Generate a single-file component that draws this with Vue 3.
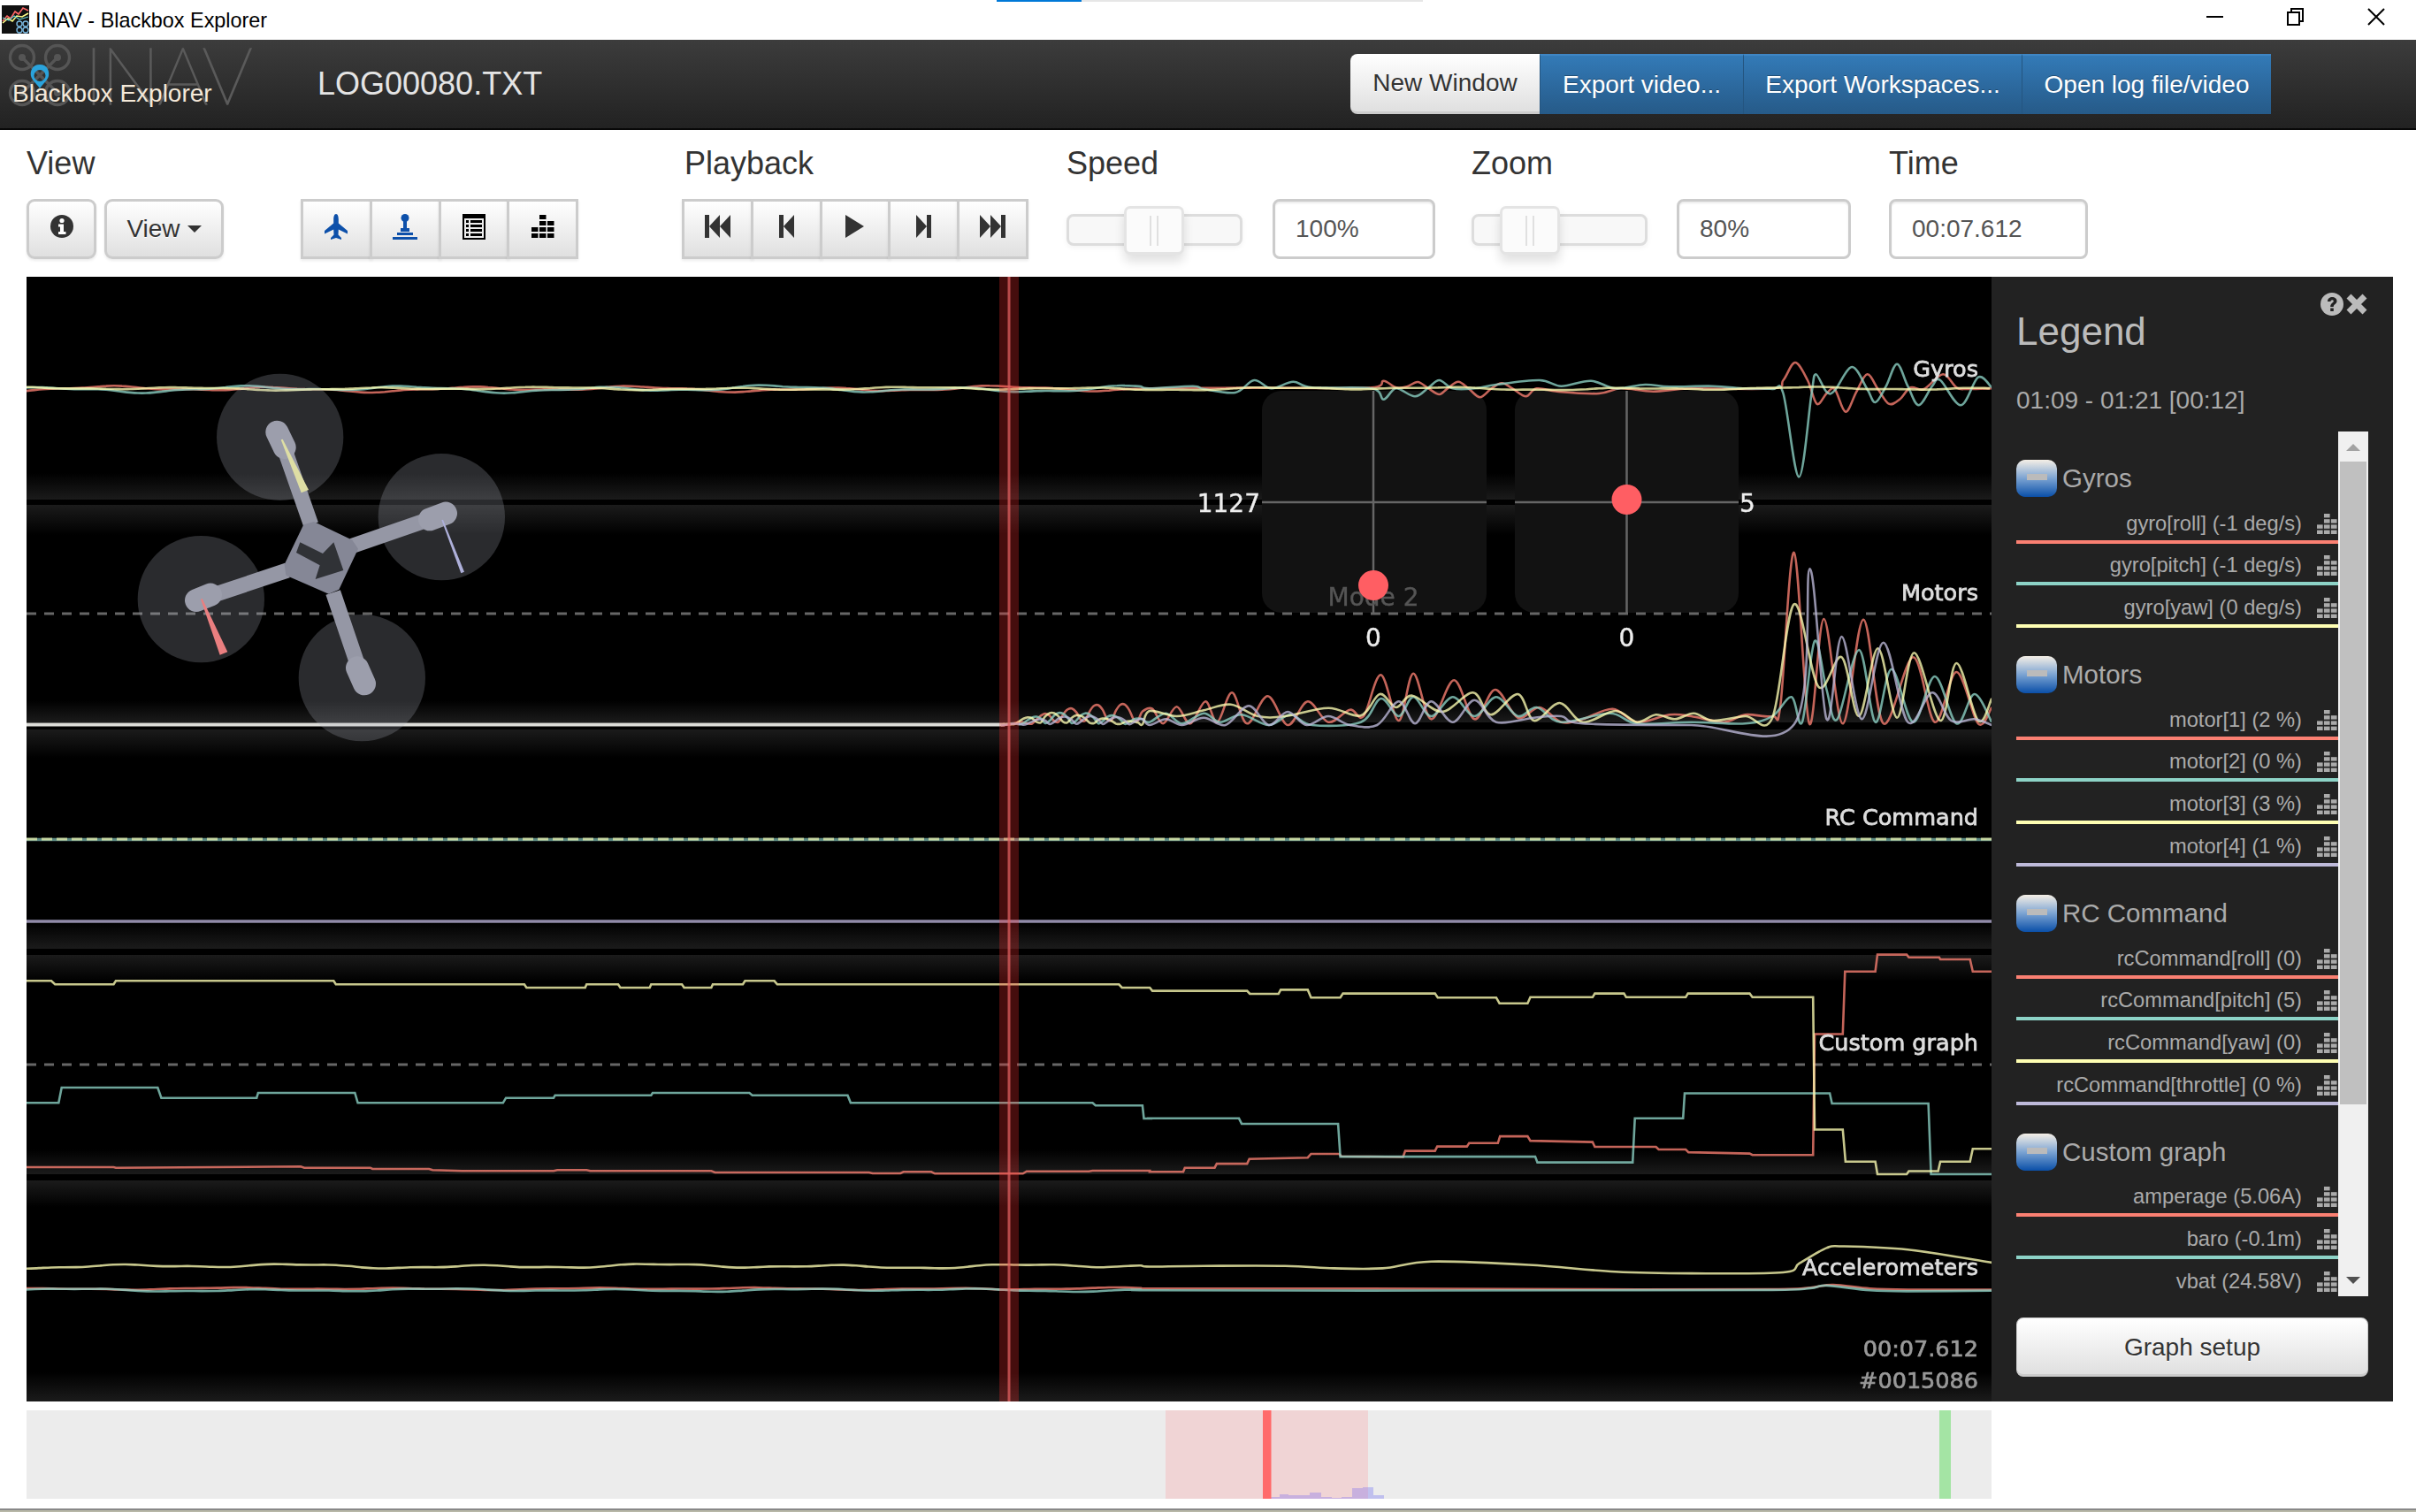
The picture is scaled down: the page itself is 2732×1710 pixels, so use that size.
<script setup>
const z4 = ([x, y]) => [1300 + x / 1.633, 380 + y / 3]
const z8 = ([x, y]) => [x / 1.206, 1000 + y / 3]
const z9 = ([x, y]) => [1300 + x / 1.633, 1000 + y / 2.613]

const pairs = (list, fn) => {
  const out = []
  for (let i = 0; i < list.length; i += 2) out.push(fn([list[i], list[i + 1]]))
  return out
}

// catmull-rom through the sampled peaks
function smooth(pts) {
  let d = `M${pts[0][0].toFixed(1)} ${pts[0][1].toFixed(1)}`
  for (let i = 0; i < pts.length - 1; i++) {
    const p0 = pts[i - 1] || pts[i]
    const p1 = pts[i]
    const p2 = pts[i + 1]
    const p3 = pts[i + 2] || p2
    const c1x = p1[0] + (p2[0] - p0[0]) / 6
    const c1y = p1[1] + (p2[1] - p0[1]) / 6
    const c2x = p2[0] - (p3[0] - p1[0]) / 6
    const c2y = p2[1] - (p3[1] - p1[1]) / 6
    d += `C${c1x.toFixed(1)} ${c1y.toFixed(1)} ${c2x.toFixed(1)} ${c2y.toFixed(1)} ${p2[0].toFixed(1)} ${p2[1].toFixed(1)}`
  }
  return d
}
const straight = (pts) => 'M' + pts.map((p) => `${p[0].toFixed(1)} ${p[1].toFixed(1)}`).join('L')

function wiggle(from, to, y, amp, seed, step = 9) {
  const pts = []
  for (let x = from; x <= to; x += step) {
    const v = Math.sin(x * 0.031 + seed) + 0.6 * Math.sin(x * 0.013 + seed * 2.3) + 0.4 * Math.sin(x * 0.077 + seed * 0.7)
    pts.push([x, y + v * amp])
  }
  return pts
}
function motorWiggle(from, to, y, amp, seed) {
  const pts = []
  for (let x = from; x <= to; x += 5) {
    const grow = Math.min(1, (x - from) / 50)
    const v = Math.abs(Math.sin(x * 0.105 + seed)) * (0.6 + 0.4 * Math.sin(x * 0.021 + seed))
    pts.push([x, y - v * amp * grow])
  }
  return pts
}

const RED = '#fb8072'
const TEAL = '#8dd3c7'
const YELLOW = '#ffffb3'
const LAV = '#bebada'

const gyroRed = [...wiggle(30, 1296, 440, 2, 1.1), ...pairs([0,178,130,176,260,176,410,175,432,152,455,175,475,172,495,156,515,178,535,198,550,178,570,155,590,180,610,208,630,180,650,160,670,178,695,205,715,178,760,190,830,195,870,178,930,188,1000,178,1150,178,1170,150,1192,90,1215,150,1232,230,1250,195,1265,180,1285,257,1305,190,1325,130,1345,180,1365,230,1385,215,1405,175,1430,180,1465,130,1490,175,1510,180,1555,178], z4)]
const gyroTeal = [...wiggle(30, 1296, 440, 2.4, 2.7), ...pairs([0,178,80,170,100,180,158,192,193,150,225,178,265,155,300,175,410,178,432,215,455,178,490,205,515,175,535,150,560,178,600,178,640,165,720,150,760,170,815,152,860,178,915,165,960,172,1040,170,1100,178,1150,180,1170,195,1199,478,1222,200,1230,130,1250,190,1265,185,1297,105,1325,180,1340,225,1360,170,1380,95,1400,170,1420,235,1445,170,1460,150,1498,235,1530,140,1555,175], z4)]
const gyroYellow = wiggle(30, 2254, 439.5, 1.1, 4.2, 6)

const motorRed = [...motorWiggle(1132, 1296, 820, 24, 0.2), ...pairs([5,1265,25,1315,50,1258,75,1315,103,1240,125,1310,152,1210,180,1315,218,1222,255,1320,292,1240,330,1310,370,1268,395,1290,427,1150,460,1305,487,1145,520,1300,562,1168,600,1300,638,1200,680,1295,720,1260,760,1310,800,1300,855,1265,900,1310,960,1285,1000,1290,1060,1310,1100,1285,1150,1290,1165,1250,1190,735,1218,1315,1245,960,1280,1315,1318,962,1355,1315,1410,1090,1450,1310,1490,1140,1530,1315,1555,1260], z4)]
const motorTeal = [...motorWiggle(1132, 1296, 820, 14, 1.4), ...pairs([0,1310,30,1280,60,1315,100,1280,130,1310,170,1285,220,1320,260,1285,300,1320,390,1310,427,1230,460,1290,487,1225,520,1290,560,1225,600,1290,640,1225,680,1290,715,1260,760,1310,850,1280,900,1315,1000,1310,1100,1315,1150,1290,1185,1225,1205,1310,1228,1035,1250,1200,1270,1300,1310,1065,1340,1310,1370,1130,1410,1310,1450,1155,1490,1315,1523,1215,1555,1310], z4)]
const motorYellow = [...motorWiggle(1132, 1296, 820, 15, 2.3), ...pairs([0,1272,50,1290,100,1270,150,1250,200,1290,250,1290,330,1262,390,1288,425,1215,455,1260,485,1220,540,1275,597,1210,630,1285,680,1215,710,1305,757,1245,800,1310,860,1272,900,1310,935,1285,970,1300,1005,1280,1040,1305,1100,1290,1150,1295,1190,910,1235,1190,1278,1090,1310,1290,1345,1060,1380,1295,1412,1075,1460,1305,1490,1110,1530,1305,1555,1230], z4)]
const motorLav = [...motorWiggle(1132, 1296, 820, 10, 0.9), ...pairs([0,1320,30,1300,60,1320,100,1295,140,1320,183,1255,220,1320,255,1275,290,1320,330,1290,370,1320,420,1320,460,1240,490,1315,520,1240,560,1310,600,1235,640,1310,710,1295,760,1290,800,1315,1000,1320,1190,1318,1219,790,1250,1300,1278,1020,1315,1300,1355,1040,1400,1310,1445,1210,1480,1305,1523,1300,1555,1320], z4)]

const customYellow = [...pairs([36,328,70,328,75,340,155,340,158,328,455,328,458,340,715,340,718,351,798,351,800,340,843,340,846,351,886,351,888,340,930,340,933,351,970,351,972,340,1013,340,1016,328,1056,328,1060,340,1526,340,1530,351,1568,351], z8), ...pairs([5,315,180,315,185,324,238,324,242,312,292,312,298,335,352,335,357,323,527,323,532,335,640,335,646,352,698,352,703,334,818,334,822,323,876,323,880,334,990,334,994,323,1108,323,1113,334,1225,334,1228,725,1280,725,1285,820,1340,820,1344,857,1398,857,1402,848,1456,848,1460,820,1515,820,1520,782,1555,782], z9)]
const customTeal = [...pairs([36,742,80,742,84,690,215,690,220,725,350,725,352,708,484,708,488,742,686,742,690,725,755,725,757,716,888,716,890,708,1022,708,1026,716,1156,716,1160,742,1490,742,1494,751,1558,751,1560,795,1568,795], z8), ...pairs([0,692,165,692,170,708,348,708,352,805,712,805,716,822,892,822,896,692,985,692,988,618,1256,618,1260,648,1438,648,1443,857,1555,857], z9)]
const customRed = [...pairs([36,960,155,960,158,962,410,958,415,962,505,962,508,966,585,966,590,970,630,973,755,973,760,970,800,970,805,973,970,973,975,978,1185,978,1190,981,1228,981,1232,976,1270,976,1275,982,1395,982,1400,974,1485,974,1490,972,1568,972], z8), ...pairs([0,850,62,850,65,838,120,838,124,826,180,826,184,812,292,808,298,797,350,797,354,804,468,806,472,788,527,788,531,775,586,775,590,765,643,765,647,745,698,745,703,758,818,762,822,776,935,776,940,784,990,784,995,792,1108,796,1113,800,1225,800,1228,443,1280,443,1284,258,1340,258,1344,208,1398,208,1402,216,1458,216,1460,222,1515,222,1520,258,1555,258], z9)]

const accYellow = [...wiggle(30, 1296, 1432, 1.6, 0.5, 14), ...pairs([0,1130,100,1128,250,1128,340,1135,430,1135,520,1115,700,1125,860,1145,1000,1150,1170,1147,1200,1120,1250,1075,1280,1070,1400,1080,1555,1118], z9)]
const accRed = [...wiggle(30, 1296, 1457.5, 0.8, 3.1, 18), ...pairs([0,1195,400,1195,800,1197,1150,1197,1220,1192,1262,1184,1330,1195,1400,1198,1555,1198], z9)]
const accTeal = [...wiggle(30, 1296, 1459, 1.1, 1.9, 18), ...pairs([0,1200,400,1201,800,1200,1150,1199,1220,1194,1250,1186,1330,1200,1400,1203,1555,1201], z9)]

const series = [
  { d: smooth(gyroRed), c: RED },
  { d: smooth(gyroTeal), c: TEAL },
  { d: smooth(gyroYellow), c: YELLOW },
  { d: smooth(motorRed), c: RED },
  { d: smooth(motorTeal), c: TEAL },
  { d: smooth(motorYellow), c: YELLOW },
  { d: smooth(motorLav), c: LAV },
  { d: straight(customRed), c: RED },
  { d: straight(customTeal), c: TEAL },
  { d: straight(customYellow), c: YELLOW },
  { d: smooth(accRed), c: RED },
  { d: smooth(accTeal), c: TEAL },
  { d: smooth(accYellow), c: YELLOW },
]

const bands = [
  { y: 535, h: 30, fill: 'url(#fadeUp)' },
  { y: 571, h: 34, fill: 'url(#fadeDown)' },
  { y: 792, h: 25, fill: 'url(#fadeUp)' },
  { y: 825, h: 32, fill: 'url(#fadeDown)' },
  { y: 1043, h: 30, fill: 'url(#fadeUp)' },
  { y: 1080, h: 30, fill: 'url(#fadeDown)' },
  { y: 1300, h: 28, fill: 'url(#fadeUp)' },
  { y: 1335, h: 30, fill: 'url(#fadeDown)' },
  { y: 1552, h: 33, fill: 'url(#fadeUp)' },
]

const chartLabels = [
  { text: 'Gyros', y: 426 },
  { text: 'Motors', y: 679 },
  { text: 'RC Command', y: 933 },
  { text: 'Custom graph', y: 1188 },
  { text: 'Accelerometers', y: 1442 },
]

const groups = [
  { name: 'Gyros', rows: [['gyro[roll] (-1 deg/s)', RED], ['gyro[pitch] (-1 deg/s)', TEAL], ['gyro[yaw] (0 deg/s)', YELLOW]] },
  { name: 'Motors', rows: [['motor[1] (2 %)', RED], ['motor[2] (0 %)', TEAL], ['motor[3] (3 %)', YELLOW], ['motor[4] (1 %)', LAV]] },
  { name: 'RC Command', rows: [['rcCommand[roll] (0)', RED], ['rcCommand[pitch] (5)', TEAL], ['rcCommand[yaw] (0)', YELLOW], ['rcCommand[throttle] (0 %)', LAV]] },
  { name: 'Custom graph', rows: [['amperage (5.06A)', RED], ['baro (-0.1m)', TEAL], ['vbat (24.58V)', 'transparent']] },
]

// stacked squares of the "chart" glyph: col, row
const histCells = [[1, 0], [1, 1], [2, 1], [0, 2], [1, 2], [2, 2], [0, 3], [1, 3], [2, 3]]

const histogram = [
  { x: 1437, w: 10, h: 2, c: '#c8b0de' },
  { x: 1447, w: 10, h: 5, c: '#c8b0de' },
  { x: 1457, w: 12, h: 4, c: '#c8b0de' },
  { x: 1469, w: 12, h: 4, c: '#c8b0de' },
  { x: 1481, w: 13, h: 7, c: '#c8b0de' },
  { x: 1494, w: 12, h: 2, c: '#c8b0de' },
  { x: 1506, w: 11, h: 1, c: '#c8b0de' },
  { x: 1517, w: 12, h: 2, c: '#c8b0de' },
  { x: 1529, w: 12, h: 12, c: '#c8b0de' },
  { x: 1541, w: 6, h: 13, c: '#c8b0de' },
  { x: 1547, w: 6, h: 13, c: '#c0c0ee' },
  { x: 1553, w: 12, h: 4, c: '#c0c0ee' },
]
</script>

<template>
  <div class="app">
    <div class="os-progress"><span class="os-blue"></span><span class="os-grey"></span></div>

    <div class="titlebar">
      <svg class="app-icon" viewBox="0 0 31 32">
        <rect width="31" height="32" fill="#111" />
        <path d="M1 18L6 12L10 15L15 7L19 10L24 3L30 6" fill="none" stroke="#f66" stroke-width="1.6" />
        <path d="M1 20L7 15L12 18L17 12L23 13L30 9" fill="none" stroke="#ff8" stroke-width="1.6" />
        <path d="M1 14L8 17L14 12L20 16L30 13" fill="none" stroke="#6cc" stroke-width="1.2" />
        <g fill="none" stroke="#7ab8e0" stroke-width="1.4">
          <circle cx="20" cy="21" r="3" /><circle cx="27" cy="21" r="3" /><circle cx="20" cy="28" r="3" /><circle cx="27" cy="28" r="3" />
        </g>
      </svg>
      <span class="app-title">INAV - Blackbox Explorer</span>
      <div class="win-controls">
        <svg width="20" height="20" viewBox="0 0 20 20"><path d="M0 10H19" stroke="#000" stroke-width="2" /></svg>
        <svg width="20" height="20" viewBox="0 0 20 20" fill="none" stroke="#000" stroke-width="2"><rect x="1" y="5" width="13" height="14" /><path d="M5 5V1H18V15H14" /></svg>
        <svg width="20" height="20" viewBox="0 0 20 20"><path d="M1 1L19 19M19 1L1 19" stroke="#000" stroke-width="2" /></svg>
      </div>
    </div>

    <header class="navbar">
      <div class="brand">
        <svg class="brand-logo" width="300" height="100" viewBox="0 0 300 100">
          <g fill="none" stroke="#555" stroke-width="3.4">
            <circle cx="25" cy="20" r="13.5" /><circle cx="65" cy="20" r="13.5" />
            <circle cx="25" cy="60" r="13.5" /><circle cx="65" cy="60" r="13.5" />
            <path d="M25 20L65 60M65 20L25 60" />
          </g>
          <g fill="#555"><circle cx="25" cy="20" r="4" /><circle cx="65" cy="20" r="4" /><circle cx="25" cy="60" r="4" /><circle cx="65" cy="60" r="4" /></g>
          <text class="brand-inav" x="95" y="73">INAV</text>
          <path d="M45 28C36 28 34 36 35 41C36 46 42 50 45 55C48 50 54 46 55 41C56 36 54 28 45 28Z M45 34A6.5 6.5 0 1 1 45 47A6.5 6.5 0 1 1 45 34Z" fill="#2aa3dc" fill-rule="evenodd" />
        </svg>
        <span class="brand-text">Blackbox Explorer</span>
      </div>
      <div class="log-name">LOG00080.TXT</div>
      <div class="nav-buttons">
        <button class="nav-btn nav-white">New Window</button>
        <button class="nav-btn nav-blue export-video">Export video...</button>
        <button class="nav-btn nav-blue export-work">Export Workspaces...</button>
        <button class="nav-btn nav-blue open-log">Open log file/video</button>
      </div>
    </header>

    <section class="toolbar">
      <div class="tool tool-view">
        <h4>View</h4>
        <div class="tool-row">
          <button class="btn btn-info">
            <svg width="26" height="26" viewBox="0 0 26 26">
              <circle cx="13" cy="13" r="13" fill="#333" />
              <circle cx="13" cy="6.5" r="2.6" fill="#fff" />
              <path d="M9 10.5H15V19H17.5V22H9V19H11V13.5H9Z" fill="#fff" />
            </svg>
          </button>
          <button class="btn btn-view">View <span class="caret"></span></button>
          <div class="btn-group view-group">
            <button class="btn-seg">
              <svg width="26" height="29" viewBox="0 0 26 29" fill="#0d50aa">
                <path d="M13 0C15 0 15.8 3 15.8 6V10.5L26 19V22.5L15.8 17.5L15.5 23.5L19 27V29L13 27L7 29V27L10.5 23.5L10.2 17.5L0 22.5V19L10.2 10.5V6C10.2 3 11 0 13 0Z" />
              </svg>
            </button>
            <button class="btn-seg">
              <svg width="28" height="29" viewBox="0 0 28 29" fill="#0d50aa">
                <circle cx="14" cy="4.5" r="4.5" />
                <path d="M12 8H16V16H19V20H9V16H12Z" />
                <rect x="5" y="21" width="18" height="3" />
                <rect x="0" y="26" width="28" height="3" />
              </svg>
            </button>
            <button class="btn-seg">
              <svg width="26" height="29" viewBox="0 0 26 29">
                <rect width="26" height="29" fill="#000" />
                <rect x="2" y="5" width="22" height="22" fill="#eee" />
                <g fill="#000">
                  <rect x="4" y="7" width="3" height="3" /><rect x="9" y="7" width="13" height="3" />
                  <rect x="4" y="12" width="3" height="3" /><rect x="9" y="12" width="13" height="3" />
                  <rect x="4" y="17" width="3" height="3" /><rect x="9" y="17" width="13" height="3" />
                  <rect x="4" y="22" width="3" height="3" /><rect x="9" y="22" width="13" height="3" />
                </g>
              </svg>
            </button>
            <button class="btn-seg">
              <svg width="26" height="26" viewBox="0 0 26 26" fill="#000">
                <rect v-for="c in histCells" :key="c.join()" :x="c[0] * 9" :y="c[1] * 7" width="7.5" height="5" />
              </svg>
            </button>
          </div>
        </div>
      </div>

      <div class="tool tool-playback">
        <h4>Playback</h4>
        <div class="btn-group playback-group">
          <button class="btn-seg"><svg width="29" height="26" viewBox="0 0 29 26" fill="#333"><rect width="5" height="26" /><path d="M5 13L17 0V26Z M17 13L29 0V26Z" /></svg></button>
          <button class="btn-seg"><svg width="17" height="26" viewBox="0 0 17 26" fill="#333"><rect width="5" height="26" /><path d="M5 13L17 0V26Z" /></svg></button>
          <button class="btn-seg"><svg width="21" height="26" viewBox="0 0 21 26" fill="#333"><path d="M0 0L21 13L0 26Z" /></svg></button>
          <button class="btn-seg"><svg width="17" height="26" viewBox="0 0 17 26" fill="#333"><rect x="12" width="5" height="26" /><path d="M12 13L0 0V26Z" /></svg></button>
          <button class="btn-seg"><svg width="29" height="26" viewBox="0 0 29 26" fill="#333"><rect x="24" width="5" height="26" /><path d="M24 13L12 0V26Z M12 13L0 0V26Z" /></svg></button>
        </div>
      </div>

      <div class="tool tool-speed">
        <h4>Speed</h4>
        <div class="tool-row">
          <div class="slider"><span class="slider-handle speed-handle"><i></i></span></div>
          <div class="field field-speed">100%</div>
        </div>
      </div>

      <div class="tool tool-zoom">
        <h4>Zoom</h4>
        <div class="tool-row">
          <div class="slider"><span class="slider-handle zoom-handle"><i></i></span></div>
          <div class="field field-zoom">80%</div>
        </div>
      </div>

      <div class="tool tool-time">
        <h4>Time</h4>
        <div class="field field-time">00:07.612</div>
      </div>
    </section>

    <main class="graph-row">
      <svg class="graph" viewBox="30 313 2222 1272" width="2222" height="1272">
        <defs>
          <linearGradient id="fadeUp" x1="0" y1="0" x2="0" y2="1">
            <stop offset="0" stop-color="#000" /><stop offset="1" stop-color="#1b1b1b" />
          </linearGradient>
          <linearGradient id="fadeDown" x1="0" y1="0" x2="0" y2="1">
            <stop offset="0" stop-color="#1b1b1b" /><stop offset="1" stop-color="#000" />
          </linearGradient>
        </defs>
        <rect x="30" y="313" width="2222" height="1272" fill="#000" />
        <rect v-for="b in bands" :key="b.y" x="30" :y="b.y" width="2222" :height="b.h" :fill="b.fill" />

        <g class="soft">
          <!-- stick overlay -->
          <rect x="1427" y="442" width="254" height="251" rx="22" fill="#121212" />
          <rect x="1713" y="442" width="253" height="251" rx="22" fill="#121212" />
          <g stroke="#666" stroke-width="2.5">
            <path d="M1553 442V694M1427 568H1681" />
            <path d="M1839.5 442V694M1713 568H1966" />
          </g>
          <text class="stick-label mode" x="1553" y="685" text-anchor="middle">Mode 2</text>

          <path d="M30 694H2252M30 1204H2252" stroke="#666" stroke-width="3" stroke-dasharray="11 9" />

          <path d="M30 819.5H1136" stroke="#dcdcd8" stroke-width="4" />
          <path d="M30 949.5H2252" stroke="#8dd3c7" stroke-width="3.5" stroke-opacity=".65" />
          <path d="M30 949H2252" stroke="#ffffb3" stroke-width="3" stroke-opacity=".65" stroke-dasharray="12 5" />
          <path d="M30 1042H2252" stroke="#918ba9" stroke-width="3.5" />
          <path v-for="(s, i) in series" :key="i" :d="s.d" fill="none" :stroke="s.c" stroke-width="2.6" stroke-opacity=".78" />

          <circle cx="1553" cy="662" r="17" fill="#ff5e63" />
          <circle cx="1839.5" cy="565" r="17" fill="#ff5e63" />
          <text class="stick-label" x="1425" y="579" text-anchor="end">1127</text>
          <text class="stick-label" x="1967" y="579">5</text>
          <text class="stick-label" x="1553" y="731" text-anchor="middle">0</text>
          <text class="stick-label" x="1839.5" y="731" text-anchor="middle">0</text>

          <text v-for="l in chartLabels" :key="l.text" class="chart-label" x="2237" :y="l.y" text-anchor="end">{{ l.text }}</text>
          <text class="chart-time" x="2237" y="1534" text-anchor="end">00:07.612</text>
          <text class="chart-time" x="2237" y="1570" text-anchor="end">#0015086</text>

          <!-- craft -->
          <g transform="translate(100 380) scale(.33333)">
            <g fill="#aeb2c2" fill-opacity=".24">
              <circle cx="650" cy="343" r="215" /><circle cx="1198" cy="614" r="215" />
              <circle cx="382" cy="893" r="215" /><circle cx="928" cy="1160" r="215" />
            </g>
            <g stroke="#9597a5" stroke-width="52" fill="none">
              <path d="M650 340L755 640M1190 610L895 712M385 892L675 795M925 1150L830 870" />
            </g>
            <g stroke="#9c9eac" stroke-width="78" stroke-linecap="round">
              <path d="M640 326L665 378M1158 622L1212 602M366 897L414 878M912 1126L936 1180" />
            </g>
            <path d="M765 630L895 692L915 722L850 860L815 875L670 812L665 775L730 640Z" fill="#858796" />
            <path d="M718 700L795 738L832 700L865 795L770 825L785 778L705 735Z" fill="#303236" />
            <path d="M653 352L659 350L747 522L722 532Z" fill="#dedea4" />
            <path d="M381 893L386 891L472 1072L446 1082Z" fill="#ea7f80" />
            <path d="M1198 625L1203 623L1275 800L1264 805Z" fill="#aeb0da" />
          </g>

          <!-- playhead -->
          <rect x="1130" y="313" width="22" height="1272" fill="#ff3030" fill-opacity=".27" />
          <rect x="1139.5" y="313" width="3" height="1272" fill="#e06060" fill-opacity=".75" />
        </g>
      </svg>

      <aside class="legend">
        <div class="legend-tools">
          <svg width="26" height="26" viewBox="0 0 26 26">
            <circle cx="13" cy="13" r="13" fill="#bbb" />
            <path d="M8 10C8 6.5 10.5 5 13.3 5C16 5 18.5 6.5 18.5 9.5C18.5 13 14.7 13 14.7 16H11.2C11.2 11.5 14.8 11.5 14.8 9.7C14.8 8.6 14 8.2 13.2 8.2C12 8.2 11.5 9 11.5 10Z M11.2 17.5H14.8V21H11.2Z" fill="#222" />
          </svg>
          <svg width="24" height="24" viewBox="0 0 24 24"><path d="M3 3L21 21M21 3L3 21" stroke="#bbb" stroke-width="7" /></svg>
        </div>
        <h3 class="legend-title">Legend</h3>
        <div class="legend-range">01:09 - 01:21 [00:12]</div>
        <div class="legend-scroll">
          <div class="legend-list">
            <div v-for="g in groups" :key="g.name" class="legend-group">
              <div class="group-head">
                <span class="group-toggle"><i></i></span>
                <span class="group-name">{{ g.name }}</span>
              </div>
              <div v-for="r in g.rows" :key="r[0]" class="legend-row" :style="{ borderBottomColor: r[1] }">
                <span>{{ r[0] }}</span>
                <svg class="row-hist" width="23" height="23" viewBox="0 0 26 26" fill="#aaa">
                  <rect v-for="c in histCells" :key="c.join()" :x="c[0] * 9" :y="c[1] * 7" width="7.5" height="5" />
                </svg>
              </div>
            </div>
          </div>
          <div class="scrollbar">
            <span class="arrow arrow-up"></span>
            <span class="thumb"></span>
            <span class="arrow arrow-down"></span>
          </div>
        </div>
        <button class="setup-btn">Graph setup</button>
      </aside>
    </main>

    <div class="overview">
      <svg viewBox="30 1595 2222 100" width="2222" height="100">
        <rect x="30" y="1595" width="2222" height="100" fill="#ececec" />
        <rect x="1318" y="1595" width="229" height="100" fill="#f0d4d5" />
        <rect v-for="h in histogram" :key="h.x" :x="h.x" :y="1695 - h.h" :width="h.w" :height="h.h" :fill="h.c" />
        <rect x="1428" y="1595" width="9.5" height="100" fill="#ff6a6a" />
        <rect x="2193" y="1595" width="13" height="100" fill="#a4e4a4" />
      </svg>
    </div>

    <div class="taskbar"></div>
  </div>
</template>

<style>
html,
body {
  margin: 0;
  background: #fff;
}
</style>

<style scoped>
.app {
  position: relative;
  width: 2732px;
  height: 1710px;
  overflow: hidden;
  display: flex;
  flex-direction: column;
  font-family: "Liberation Sans", Arial, sans-serif;
  color: #333;
  background: #fff;
}

.os-progress {
  position: absolute;
  top: 0;
  left: 1127px;
  display: flex;
  height: 2px;
}
.os-blue {
  width: 96px;
  background: #0078d7;
}
.os-grey {
  width: 386px;
  background: #e6e6e6;
}

.titlebar {
  height: 45px;
  display: flex;
  align-items: center;
  flex-shrink: 0;
}
.app-icon {
  width: 31px;
  height: 32px;
  margin-left: 2px;
  margin-top: -1px;
}
.app-title {
  margin-left: 7px;
  margin-top: 2px;
  font-size: 23.4px;
  color: #000;
}
.win-controls {
  margin-left: auto;
  margin-right: 35px;
  display: flex;
  gap: 71px;
  align-items: center;
  margin-top: -7px;
}

.navbar {
  height: 102px;
  box-sizing: border-box;
  flex-shrink: 0;
  display: flex;
  align-items: center;
  background: linear-gradient(#3c3c3c, #222);
  border-bottom: 2px solid #080808;
}
.brand {
  position: relative;
  width: 359px;
  height: 100px;
  flex-shrink: 0;
}
.brand-logo {
  position: absolute;
  left: 0;
  top: 0;
}
.brand-inav {
  font-family: Lato, "Liberation Sans", sans-serif;
  font-weight: 100;
  font-size: 90px;
  letter-spacing: -3px;
  fill: #5a5a5a;
  stroke: #5a5a5a;
  stroke-width: 1.6px;
}
.brand-text {
  position: absolute;
  left: 14px;
  top: 44px;
  font-size: 28px;
  line-height: 34px;
  color: #f4e8d8;
  white-space: nowrap;
}
.log-name {
  font-size: 36px;
  color: #e4e4e4;
}
.nav-buttons {
  margin-left: auto;
  margin-right: 164px;
  display: flex;
  height: 68px;
}
.nav-btn {
  font: 28px "Liberation Sans", Arial, sans-serif;
  padding: 0;
  margin: 0;
  border: 0;
  white-space: nowrap;
}
.nav-white {
  width: 214px;
  color: #333;
  background: linear-gradient(#fff, #e0e0e0);
  border-radius: 8px 0 0 8px;
  border-bottom: 3px solid #ccc;
  text-shadow: 0 1px 0 #fff;
}
.nav-blue {
  color: #fff;
  background: linear-gradient(#337ab7, #265a88);
  border-top: 2px solid #3f86c4;
  border-left: 1px solid #245580;
  text-shadow: 0 -1px 0 rgba(0, 0, 0, 0.3);
}
.export-video {
  width: 230px;
}
.export-work {
  width: 315px;
}
.open-log {
  width: 282px;
}

.toolbar {
  height: 166px;
  box-sizing: border-box;
  flex-shrink: 0;
  display: flex;
  padding-left: 30px;
}
.tool h4 {
  margin: 0;
  height: 78px;
  line-height: 76px;
  font-size: 36px;
  font-weight: 400;
  color: #333;
}
.tool-row {
  display: flex;
  height: 68px;
}
.tool-view {
  width: 741px;
}
.tool-playback {
  width: 435px;
}
.tool-playback h4 {
  padding-left: 3px;
}
.tool-speed {
  width: 458px;
}
.tool-zoom {
  width: 472px;
}

.btn,
.btn-seg {
  box-sizing: border-box;
  height: 68px;
  padding: 0;
  display: flex;
  align-items: center;
  justify-content: center;
  background: linear-gradient(#fff, #e0e0e0);
  border: 3px solid #ccc;
  font: 28px "Liberation Sans", Arial, sans-serif;
  color: #333;
  text-shadow: 0 1px 0 #fff;
  box-shadow: 0 2px 3px rgba(0, 0, 0, 0.08);
}
.btn {
  border-radius: 9px;
}
.btn-info {
  width: 79px;
  padding-bottom: 6px;
}
.btn-view {
  width: 135px;
  margin-left: 9px;
}
.caret {
  display: inline-block;
  margin-left: 8px;
  border-left: 8px solid transparent;
  border-right: 8px solid transparent;
  border-top: 8px solid #333;
}
.btn-group {
  display: flex;
  height: 68px;
}
.btn-seg {
  margin-left: -3px;
  padding-bottom: 6px;
}
.btn-seg:first-child {
  margin-left: 0;
}
.view-group {
  margin-left: 87px;
  width: 314px;
}
.view-group .btn-seg {
  flex: 1;
}
.playback-group {
  width: 392px;
}
.playback-group .btn-seg {
  flex: 1;
}

.slider {
  position: relative;
  box-sizing: border-box;
  width: 199px;
  height: 36px;
  margin-top: 17px;
  background: #f8f8f8;
  border: 3px solid #ddd;
  border-radius: 8px;
  box-shadow: 0 2px 6px rgba(0, 0, 0, 0.05);
}
.slider-handle {
  position: absolute;
  top: -12px;
  box-sizing: border-box;
  width: 68px;
  height: 55px;
  background: #fbfbfb;
  border: 3px solid #e4e4e4;
  border-radius: 7px;
  box-shadow: 0 8px 12px rgba(0, 0, 0, 0.12);
  display: flex;
  align-items: center;
  justify-content: center;
}
.slider-handle i {
  width: 6px;
  height: 34px;
  border-left: 2px solid #e0e0e0;
  border-right: 2px solid #e0e0e0;
}
.speed-handle {
  left: 62px;
}
.zoom-handle {
  left: 29px;
}

.field {
  box-sizing: border-box;
  height: 68px;
  line-height: 62px;
  padding-left: 23px;
  border: 3px solid #ccc;
  border-radius: 8px;
  font-size: 28px;
  color: #555;
  background: #fff;
  box-shadow: inset 0 2px 2px rgba(0, 0, 0, 0.08);
}
.field-speed {
  width: 184px;
  margin-left: 34px;
}
.field-zoom {
  width: 197px;
  margin-left: 33px;
}
.field-time {
  width: 225px;
}

.graph-row {
  display: flex;
  height: 1272px;
  padding-left: 30px;
  flex-shrink: 0;
}
.graph {
  display: block;
  flex-shrink: 0;
}
.soft {
  filter: blur(0.6px);
}
.stick-label {
  font-family: "DejaVu Sans", sans-serif;
  font-size: 28px;
  fill: #eee;
  stroke: #eee;
  stroke-width: 0.4px;
}
.stick-label.mode {
  fill: #555;
  stroke: #555;
}
.chart-label {
  font-family: "DejaVu Sans", sans-serif;
  font-size: 25.5px;
  fill: #ddd;
  stroke: #ddd;
  stroke-width: 0.8px;
}
.chart-time {
  font-family: "DejaVu Sans", sans-serif;
  font-size: 25.5px;
  fill: #999;
  stroke: #999;
  stroke-width: 0.7px;
}

.legend {
  position: relative;
  box-sizing: border-box;
  width: 454px;
  height: 1272px;
  flex-shrink: 0;
  padding: 0 28px;
  background: #222;
  color: #aaa;
}
.legend-tools {
  position: absolute;
  top: 18px;
  right: 29px;
  display: flex;
  align-items: center;
  gap: 3px;
}
.legend-title {
  margin: 0;
  padding-top: 33px;
  height: 58px;
  line-height: 58px;
  font-size: 44px;
  font-weight: 400;
  color: #bbb;
}
.legend-range {
  margin-top: 32px;
  height: 34px;
  line-height: 34px;
  font-size: 28px;
  color: #aaa;
}
.legend-scroll {
  display: flex;
  height: 978px;
  margin-top: 18px;
  overflow: hidden;
}
.legend-list {
  box-sizing: border-box;
  width: 364px;
  flex-shrink: 0;
  padding-top: 32px;
  overflow: hidden;
}
.legend-group {
  margin-bottom: 32px;
}
.group-head {
  display: flex;
  align-items: center;
  height: 42px;
  margin-bottom: 5px;
}
.group-toggle {
  box-sizing: border-box;
  width: 46px;
  height: 42px;
  padding-top: 16px;
  display: flex;
  justify-content: center;
  border-radius: 10px;
  background: linear-gradient(#f5efe6, #7ba3d2 50%, #0a4fa8);
}
.group-toggle i {
  width: 23px;
  height: 7px;
  background: #bbb;
}
.group-name {
  margin-left: 6px;
  font-size: 29.5px;
  color: #aaa;
}
.legend-row {
  box-sizing: border-box;
  height: 47.7px;
  display: flex;
  justify-content: flex-end;
  align-items: flex-end;
  padding-bottom: 5px;
  border-bottom: 4px solid;
  font-size: 23.7px;
  line-height: 28px;
  color: #aaa;
}
.row-hist {
  margin-left: 17px;
  margin-right: 1px;
  margin-bottom: 2px;
}
.scrollbar {
  position: relative;
  width: 34px;
  background: #f0f0f0;
  flex-shrink: 0;
}
.thumb {
  position: absolute;
  top: 34px;
  left: 2px;
  width: 30px;
  height: 727px;
  background: #c0c0c0;
}
.arrow {
  position: absolute;
  left: 9px;
  border-left: 8px solid transparent;
  border-right: 8px solid transparent;
}
.arrow-up {
  top: 14px;
  border-bottom: 8px solid #a3a3a3;
}
.arrow-down {
  bottom: 14px;
  border-top: 8px solid #505050;
}
.setup-btn {
  display: block;
  box-sizing: border-box;
  width: 398px;
  height: 67px;
  margin-top: 24px;
  padding: 2px 0 0;
  border: 1px solid #ccc;
  border-bottom: 3px solid #ccc;
  border-radius: 8px;
  background: linear-gradient(#fff, #e0e0e0);
  font: 28px "Liberation Sans", Arial, sans-serif;
  color: #333;
  text-shadow: 0 1px 0 #fff;
}

.overview {
  margin-top: 10px;
  padding-left: 30px;
  height: 100px;
  flex-shrink: 0;
}
.overview svg {
  display: block;
}
.taskbar {
  margin-top: 11px;
  height: 4px;
  flex-shrink: 0;
  box-sizing: border-box;
  border-top: 2px solid #888;
  background: #b8b8a8;
}
</style>
